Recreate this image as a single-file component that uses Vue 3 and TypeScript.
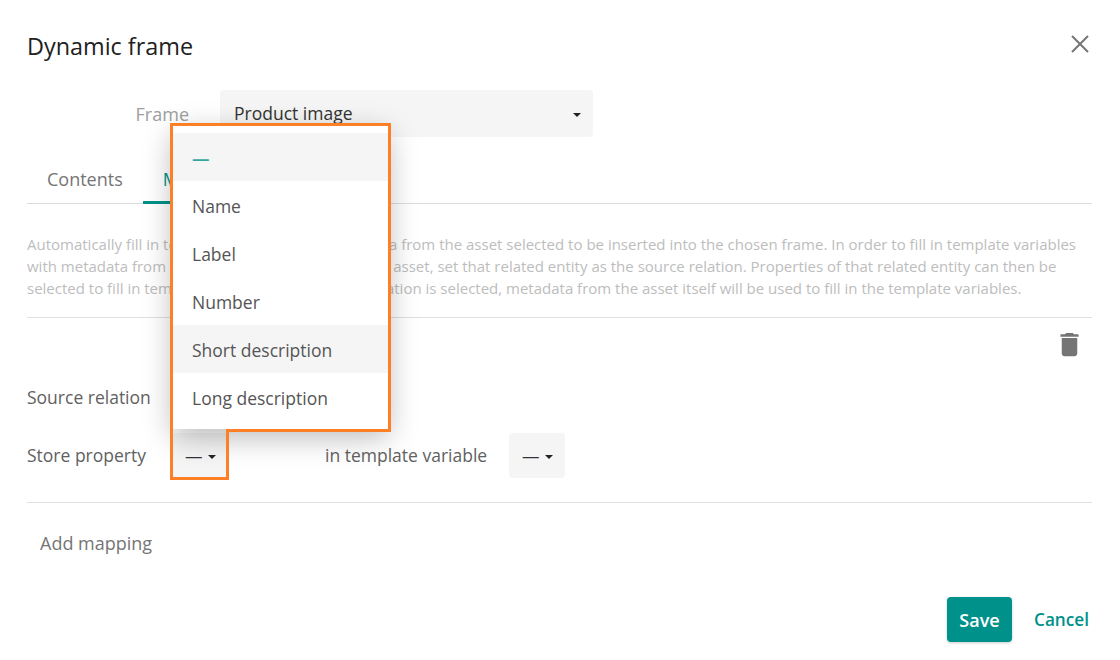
<script setup lang="ts">
const options: string[] = ['—', 'Name', 'Label', 'Number', 'Short description', 'Long description']
</script>

<template>
  <div class="dialog">
    <header class="head">
      <h1 class="title">Dynamic frame</h1>
      <svg class="close" width="18" height="18" viewBox="0 0 18 18"><path d="M1 1l16 16M17 1L1 17" fill="none" stroke="#757575" stroke-width="2" /></svg>
    </header>

    <div class="frame-row">
      <span class="frame-label">Frame</span>
      <div class="select frame-select"><span class="frame-value">Product image</span><i class="caret"></i></div>
    </div>

    <nav class="tabs">
      <span class="tab">Contents</span>
      <span class="tab active">Metadata</span>
    </nav>

    <p class="desc">
      <span>Automatically fill in template variables with metadata from the asset selected to be inserted into the chosen frame. In order to fill in template variables</span>
      <span>with metadata from an entity which is related to the asset, set that related entity as the source relation. Properties of that related entity can then be</span>
      <span>selected to fill in template variables. If no source relation is selected, metadata from the asset itself will be used to fill in the template variables.</span>
    </p>

    <section class="mapping">
      <div class="trash-row">
        <svg class="trash" width="31" height="31" viewBox="0 0 24 24"><path fill="#757575" d="M6 19c0 1.1.9 2 2 2h8c1.1 0 2-.9 2-2V7H6v12zM19 4h-3.5l-1-1h-5l-1 1H5v2h14V4z" /></svg>
      </div>
      <div class="row">
        <span class="row-label">Source relation</span>
        <div class="select small"><span>—</span><i class="caret"></i></div>
      </div>
      <div class="row">
        <span class="row-label">Store property</span>
        <div class="select small"><span>—</span><i class="caret"></i></div>
        <span class="var-label">in template variable</span>
        <div class="select small"><span>—</span><i class="caret"></i></div>
      </div>
    </section>

    <div class="add">Add mapping</div>

    <footer class="foot">
      <button class="save">Save</button>
      <button class="cancel">Cancel</button>
    </footer>

    <ul class="menu">
      <li v-for="(o, i) in options" :key="o" :class="{ first: i === 0, hover: i === 4 }">{{ o }}</li>
    </ul>

    <svg class="callout" width="1120" height="660" viewBox="0 0 1120 660">
      <path d="M171.5 124.5H389.5V430.5H227.5V478.5H171.5Z" fill="none" stroke="#ff7f27" stroke-width="3" />
    </svg>
  </div>
</template>

<style>
html, body { background: #fff; }
</style>

<style scoped>
.dialog {
  position: relative;
  width: 1120px;
  height: 660px;
  box-sizing: border-box;
  padding: 0 28px 0 27px;
  overflow: hidden;
  font-family: "Open Sans", sans-serif;
  font-size: 17.5px;
  color: #616161;
  background: #fff;
}
.head {
  display: flex;
  justify-content: space-between;
  padding-top: 23px;
  height: 70px;
  box-sizing: border-box;
}
.title {
  margin: 0;
  font-size: 23.4px;
  font-weight: 400;
  line-height: 46px;
  color: #212121;
}
.close { margin: 12px 3px 0 0; }
.frame-row {
  display: flex;
  align-items: center;
  margin-top: 20px;
}
.frame-label {
  width: 162px;
  text-align: right;
  margin-right: 31px;
  font-size: 18px;
  color: #9e9e9e;
}
.select {
  display: flex;
  align-items: center;
  box-sizing: border-box;
  height: 45px;
  border-radius: 4px;
  background: #f5f5f5;
  color: #333;
}
.frame-select {
  width: 373px;
  height: 47px;
  padding: 0 12px 0 14px;
  justify-content: space-between;
}
.frame-value { padding-bottom: 2px; }
.caret {
  display: block;
  width: 0;
  height: 0;
  border-left: 4px solid transparent;
  border-right: 4px solid transparent;
  border-top: 4px solid #222;
  margin-top: 2px;
}
.tabs {
  display: flex;
  margin-top: 17px;
  height: 50px;
  box-sizing: border-box;
  border-bottom: 1px solid #dcdcdc;
}
.tab {
  padding: 0 20px;
  line-height: 50px;
  height: 50px;
  box-sizing: border-box;
  font-size: 18px;
  color: #757575;
}
.tab.active {
  color: #00918a;
  border-bottom: 3px solid #00918a;
}
.desc {
  margin: 29px 0 18px;
  font-size: 15px;
  line-height: 22px;
  color: #bdbdbd;
  white-space: nowrap;
}
.desc span { display: block; }
.mapping {
  border-top: 1px solid #e0e0e0;
  border-bottom: 1px solid #e0e0e0;
  padding-bottom: 24px;
}
.trash-row {
  display: flex;
  justify-content: flex-end;
  height: 57px;
  box-sizing: border-box;
  padding: 11px 7px 0 0;
}
.row {
  display: flex;
  align-items: center;
  height: 45px;
}
.row + .row { margin-top: 13px; }
.row-label { width: 145px; padding-bottom: 1px; }
.small {
  width: 56px;
  padding: 0 12px 0 13px;
  justify-content: space-between;
}
.var-label {
  width: 184px;
  margin-left: 97px;
  padding-bottom: 1px;
}
.add {
  margin: 20px 0 0 13px;
  line-height: 40px;
  font-size: 18px;
  color: #757575;
}
.foot {
  display: flex;
  justify-content: flex-end;
  align-items: center;
  margin-top: 34px;
}
.save, .cancel {
  font-family: inherit;
  font-size: 18px;
  border: 0;
  padding: 0;
  height: 45px;
}
.save {
  width: 65px;
  border-radius: 4px;
  background: #00918a;
  color: #fff;
  font-weight: 600;
  box-shadow: 0 1px 3px rgba(0, 0, 0, 0.2);
}
.cancel {
  margin: 0 3px 0 22px;
  background: none;
  color: #00918a;
  font-size: 17.2px;
  font-weight: 600;
}
.menu {
  position: absolute;
  left: 173px;
  top: 125px;
  width: 215px;
  height: 304px;
  box-sizing: border-box;
  margin: 0;
  padding: 8px 0;
  list-style: none;
  background: #fff;
  box-shadow: 0 8px 28px rgba(0, 0, 0, 0.28);
}
.menu li {
  height: 48px;
  line-height: 50px;
  padding-left: 19px;
  color: #555;
}
.menu li.first {
  background: #f5f5f5;
  color: #33a6a0;
  font-weight: 600;
}
.menu li.hover { background: #f5f5f5; }
.callout {
  position: absolute;
  left: 0;
  top: 0;
  pointer-events: none;
}
</style>
